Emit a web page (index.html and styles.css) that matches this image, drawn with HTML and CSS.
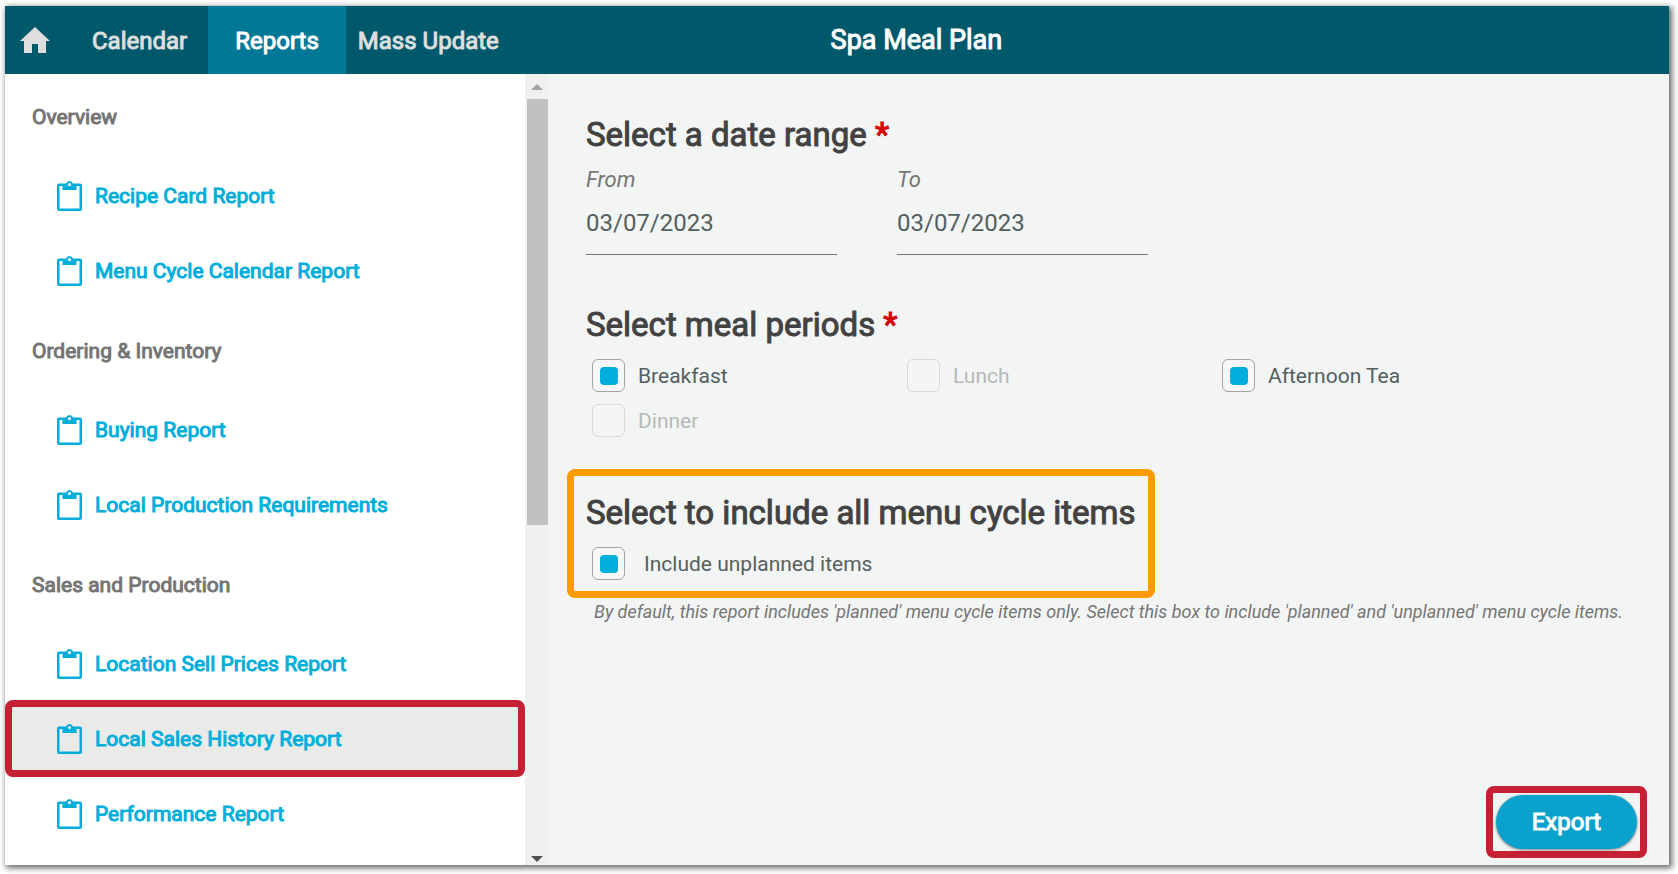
FILE: index.html
```html
<!DOCTYPE html>
<html lang="en">
<head>
    <meta charset="utf-8">
    <title>Spa Meal Plan</title>
    <meta name="viewport" content="width=device-width, initial-scale=1.0">
    <link rel="stylesheet" href="styles.css">
</head>
<body>
    <svg class="defs" aria-hidden="true">
        <symbol id="clipboard" viewBox="0 0 25 30">
            <path fill="currentColor" fill-rule="evenodd" d="M2 2.500H9A3.700 3.700 0 0 1 16 2.500H23A2 2 0 0 1 25 4.500V28A2 2 0 0 1 23 30H2A2 2 0 0 1 0 28V4.500A2 2 0 0 1 2 2.500zM2.500 5V27.500H22.500V5H19.500V9H5.500V5zM12.500 2a1.600 1.600 0 1 0 0 3.200a1.600 1.600 0 1 0 0-3.200z"/>
        </symbol>
    </svg>
    <div class="window">
        <header class="topbar">
            <nav class="tabs">
                <a class="home" href="#" aria-label="Home">
                    <svg width="30" height="26" viewBox="0 0 30 26"><path fill="currentColor" d="M15 0L30 14h-4v12h-8v-9h-6v9H4V14H0z"/></svg>
                </a>
                <a class="tab" href="#">Calendar</a>
                <a class="tab active" href="#">Reports</a>
                <a class="tab" href="#">Mass Update</a>
            </nav>
            <h1 class="title">Spa Meal Plan</h1>
        </header>
        <div class="content">
            <aside class="sidebar">
                <h2 class="group">Overview</h2>
                <a class="report" href="#"><svg class="icon"><use href="#clipboard"/></svg>Recipe Card Report</a>
                <a class="report" href="#"><svg class="icon"><use href="#clipboard"/></svg>Menu Cycle Calendar Report</a>
                <h2 class="group">Ordering &amp; Inventory</h2>
                <a class="report" href="#"><svg class="icon"><use href="#clipboard"/></svg>Buying Report</a>
                <a class="report" href="#"><svg class="icon"><use href="#clipboard"/></svg>Local Production Requirements</a>
                <h2 class="group">Sales and Production</h2>
                <a class="report" href="#"><svg class="icon"><use href="#clipboard"/></svg>Location Sell Prices Report</a>
                <a class="report selected" href="#"><svg class="icon"><use href="#clipboard"/></svg>Local Sales History Report</a>
                <a class="report" href="#"><svg class="icon"><use href="#clipboard"/></svg>Performance Report</a>
            </aside>
            <div class="scrollbar" aria-hidden="true">
                <span class="arrow up"></span>
                <div class="track"><div class="thumb"></div></div>
                <span class="arrow down"></span>
            </div>
            <main class="main">
                <section class="section">
                    <h2 class="heading">Select a date range <span class="required">*</span></h2>
                    <div class="dates">
                        <div class="date">
                            <label for="from">From</label>
                            <input type="text" id="from" value="03/07/2023">
                        </div>
                        <div class="date">
                            <label for="to">To</label>
                            <input type="text" id="to" value="03/07/2023">
                        </div>
                    </div>
                </section>
                <section class="section periods-section">
                    <h2 class="heading">Select meal periods <span class="required">*</span></h2>
                    <div class="periods">
                        <label class="check"><input type="checkbox" checked>Breakfast</label>
                        <label class="check disabled"><input type="checkbox" disabled>Lunch</label>
                        <label class="check"><input type="checkbox" checked>Afternoon Tea</label>
                        <label class="check disabled"><input type="checkbox" disabled>Dinner</label>
                    </div>
                </section>
                <section class="unplanned">
                    <h2 class="heading">Select to include all menu cycle items</h2>
                    <label class="check wide"><input type="checkbox" checked>Include unplanned items</label>
                </section>
                <p class="note">By default, this report includes 'planned' menu cycle items only. Select this box to include 'planned' and 'unplanned' menu cycle items.</p>
                <div class="actions">
                    <button type="button" class="export-btn">Export</button>
                </div>
            </main>
        </div>
    </div>
</body>
</html>
```
FILE: styles.css
```css
* {
    box-sizing: border-box;
}
body {
    margin: 0;
    padding: 6px 9px 9px 5px;
    min-height: 100vh;
    display: flex;
    background: white;
    font-family: Roboto, sans-serif;
    color: #53605f;
}
h1, h2, p {
    margin: 0;
}
a {
    text-decoration: none;
}
.defs {
    position: absolute;
    width: 0;
    height: 0;
}
.window {
    flex: 1;
    display: flex;
    flex-direction: column;
    box-shadow: 2px 2px 6px 1px rgba(0, 0, 0, 0.6);
}

/* Thickened regular weight, used for all emphasised text */
.tab, .title, .group, .report, .heading, .export-btn {
    font-weight: 400;
    -webkit-text-stroke: 1px currentColor;
}

/* Top bar */
.topbar {
    display: flex;
    height: 68px;
    padding-right: 347px;
    background: #00596b;
    color: white;
}
.tabs {
    display: flex;
}
.tabs a {
    display: flex;
    align-items: center;
    color: #dedede;
}
.home {
    padding: 0 30px 0 15px;
}
.tab {
    padding: 2px 12px 0;
    font-size: 24px;
}
.tabs .active {
    margin-left: 9px;
    padding: 2px 27px 0;
    background: #007896;
    color: white;
}
.title {
    flex: 1;
    text-align: center;
    font-size: 27px;
    line-height: 68px;
}

.content {
    flex: 1;
    display: flex;
}

/* Report list */
.sidebar {
    width: 520px;
    flex-shrink: 0;
    background: white;
}
.group {
    padding: 2px 0 0 27px;
    font-size: 21px;
    line-height: 82px;
    color: #757575;
}
.report {
    display: flex;
    align-items: center;
    gap: 13px;
    height: 75px;
    padding-left: 52px;
    font-size: 21px;
    color: #00aedb;
}
.icon {
    width: 25px;
    height: 30px;
}
.selected {
    height: 77px;
    margin: -1px 0;
    padding-left: 45px;
    border: 7px solid #c62034;
    border-radius: 8px;
    background: #eaeae8;
}
.scrollbar {
    display: flex;
    flex-direction: column;
    align-items: center;
    width: 24px;
    flex-shrink: 0;
    padding: 10px 0 3px;
    background: #f0f0f0;
}
.track {
    flex: 1;
    margin: 9px 0;
}
.thumb {
    width: 21px;
    height: 57%;
    background: #c1c1c1;
}
.arrow {
    border: 6px solid transparent;
}
.up {
    border-top: 0;
    border-bottom-color: #a3a3a3;
}
.down {
    border-bottom: 0;
    border-top-color: #505050;
}

/* Report options */
.main {
    flex: 1;
    display: flex;
    flex-direction: column;
    padding: 41px 22px 7px 18px;
    background: #f3f5f4;
}
.section {
    padding-left: 19px;
}
.heading {
    font-size: 33px;
    line-height: 40px;
    color: #424242;
}
.required {
    color: #d50000;
}
.dates {
    display: flex;
    gap: 60px;
}
.date {
    width: 251px;
}
.date label {
    display: block;
    font-size: 22px;
    font-style: italic;
    line-height: 49px;
    color: #757575;
}
.date input {
    width: 100%;
    height: 51px;
    padding: 0 0 12px;
    border: 0;
    border-bottom: 1px solid #757575;
    background: none;
    font: inherit;
    font-size: 24px;
    color: inherit;
}
.periods-section {
    margin-top: 50px;
}
.periods {
    display: grid;
    grid-template-columns: repeat(3, 315px);
    row-gap: 12px;
    padding: 14px 0 0 6px;
}
.check {
    display: flex;
    align-items: center;
    gap: 13px;
    font-size: 21px;
}
.check input {
    appearance: none;
    display: grid;
    place-content: center;
    width: 33px;
    height: 33px;
    margin: 0;
    border: 1px solid #a3a3a3;
    border-radius: 6px;
    background: #f7f7f7;
}
.check input:checked::before {
    content: "";
    width: 18px;
    height: 18px;
    border-radius: 4px;
    background: #00aedb;
}
.disabled {
    color: #b5b9b8;
}
.check input:disabled {
    border-color: #d8d8d8;
    background: #f5f5f5;
}
.unplanned {
    align-self: flex-start;
    margin-top: 32px;
    padding: 17px 12px 11px;
    border: 7px solid #ff9a00;
    border-radius: 8px;
}
.wide {
    gap: 19px;
    padding: 14px 0 0 6px;
}
.note {
    padding-left: 27px;
    font-size: 18px;
    font-style: italic;
    line-height: 28px;
    color: #757575;
}
.actions {
    align-self: flex-end;
    margin-top: auto;
    padding: 2px 3px;
    border: 7px solid #c62034;
    border-radius: 8px;
}
.export-btn {
    display: block;
    height: 54px;
    padding: 0 36px;
    border: 0;
    border-radius: 27px;
    background: #0aa2cd;
    box-shadow: 0 1px 3px rgba(0, 0, 0, 0.5);
    color: white;
    font-family: inherit;
    font-size: 24px;
}
```
